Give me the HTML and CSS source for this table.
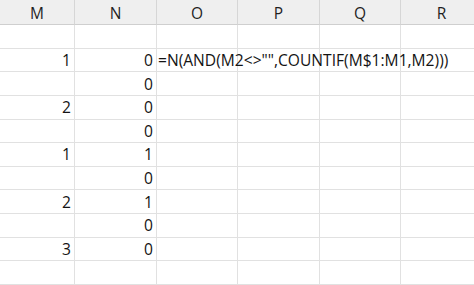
FILE: index.html
```html
<!DOCTYPE html>
<html>
<head>
<meta charset="utf-8">
<link rel="stylesheet" href="styles.css">
</head>
<body>
<div class="sheet">
  <div class="hd">M</div><div class="hd">N</div><div class="hd">O</div><div class="hd">P</div><div class="hd">Q</div><div class="hd last">R</div>

  <div class="c"></div><div class="c"></div><div class="c"></div><div class="c"></div><div class="c"></div><div class="c last"></div>

  <div class="c num">1</div><div class="c num">0</div><div class="c txt"><span class="formula">=N(AND(M2&lt;&gt;"",COUNTIF(M$1:M1,M2)))</span></div><div class="c"></div><div class="c"></div><div class="c last"></div>

  <div class="c num"></div><div class="c num">0</div><div class="c"></div><div class="c"></div><div class="c"></div><div class="c last"></div>

  <div class="c num">2</div><div class="c num">0</div><div class="c"></div><div class="c"></div><div class="c"></div><div class="c last"></div>

  <div class="c num"></div><div class="c num">0</div><div class="c"></div><div class="c"></div><div class="c"></div><div class="c last"></div>

  <div class="c num">1</div><div class="c num">1</div><div class="c"></div><div class="c"></div><div class="c"></div><div class="c last"></div>

  <div class="c num"></div><div class="c num">0</div><div class="c"></div><div class="c"></div><div class="c"></div><div class="c last"></div>

  <div class="c num">2</div><div class="c num">1</div><div class="c"></div><div class="c"></div><div class="c"></div><div class="c last"></div>

  <div class="c num"></div><div class="c num">0</div><div class="c"></div><div class="c"></div><div class="c"></div><div class="c last"></div>

  <div class="c num">3</div><div class="c num">0</div><div class="c"></div><div class="c"></div><div class="c"></div><div class="c last"></div>

  <div class="c"></div><div class="c"></div><div class="c"></div><div class="c"></div><div class="c"></div><div class="c last"></div>
</div>
</body>
</html>
```

FILE: styles.css
```css
html, body {
  margin: 0;
  padding: 0;
  background: #ffffff;
}

body {
  width: 474px;
  height: 285px;
  overflow: hidden;
  font-family: "Open Sans", "Liberation Sans", sans-serif;
  color: #141414;
}

.sheet {
  display: grid;
  grid-template-columns: 75px 82px 81px 82px 81px 1fr;
  grid-template-rows: 25px repeat(11, 1fr);
  height: 285px;
  width: 482px;
}

.hd {
  background: #efefef;
  border-right: 1px solid #d6d6d6;
  border-bottom: 1px solid #cfcfcf;
  display: flex;
  align-items: center;
  justify-content: center;
  font-size: 15.5px;
  color: #1f1f1f;
  padding-top: 1px;
}

.c {
  border-right: 1px solid #e1e1e1;
  border-bottom: 1px solid #e1e1e1;
  font-size: 15.6px;
  display: flex;
  align-items: center;
  min-width: 0;
}

.last {
  border-right: none;
}

.num {
  justify-content: flex-end;
  padding-right: 3px;
}

.txt {
  overflow: visible;
  padding-left: 1px;
}

.formula {
  white-space: nowrap;
  position: relative;
  z-index: 1;
}
```
